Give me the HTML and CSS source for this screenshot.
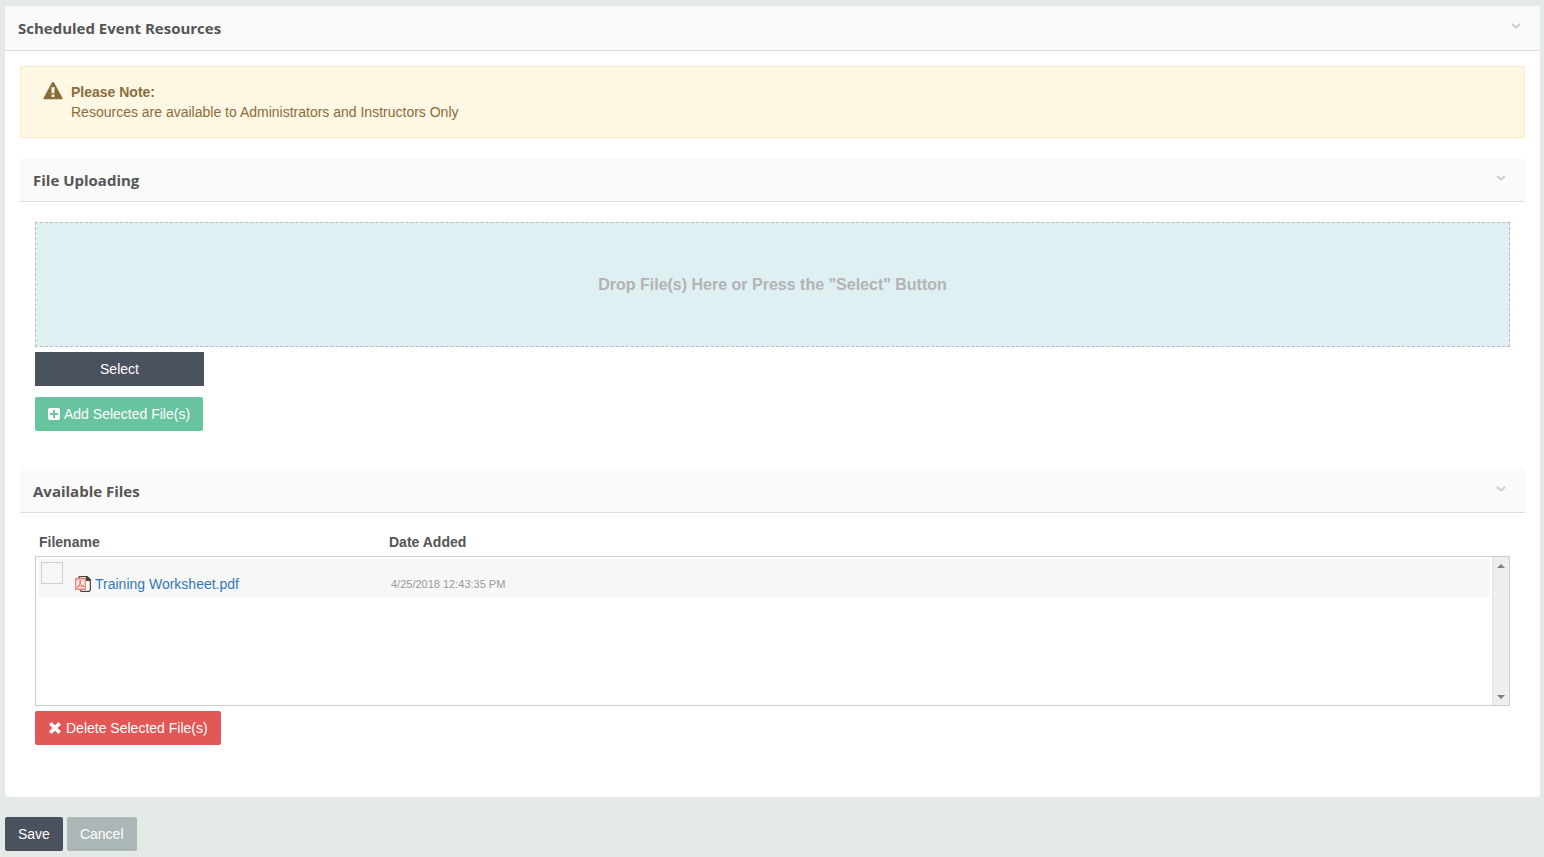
FILE: index.html
```
<!DOCTYPE html>
<html lang="en">
<head>
    <meta charset="UTF-8">
    <title>Scheduled Event Resources</title>
    <link rel="stylesheet" href="styles.css">
</head>
<body>
    <form class="page">
        <section class="panel">
            <div class="panel-heading">
                <h1>Scheduled Event Resources</h1>
                <button type="button" class="collapse-toggle" aria-label="Collapse resources">
                    <svg width="10" height="6" viewBox="0 0 10 6"><path d="M1 1l4 3.5L9 1"/></svg>
                </button>
            </div>
            <div class="panel-content">
                <div class="alert">
                    <svg class="alert-icon" width="20" height="18" viewBox="0 0 20 18">
                        <path fill-rule="evenodd" d="M10 0c.6 0 .9.2 1.200.7l8.300 15.300c.4.7 0 1.200-.7 1.200H1.200c-.7 0-1.100-.5-.7-1.200L8.800.7C9.100.2 9.400 0 10 0zM8.300 5.300l.4 6h2.600l.4-6zM8.600 12.500v2.600h2.800v-2.600z"/>
                    </svg>
                    <div>
                        <strong>Please Note:</strong>
                        <p>Resources are available to Administrators and Instructors Only</p>
                    </div>
                </div>

                <!-- Upload -->
                <section class="sub-panel">
                    <div class="panel-heading">
                        <h2>File Uploading</h2>
                        <button type="button" class="collapse-toggle" aria-label="Collapse file uploading">
                            <svg width="10" height="6" viewBox="0 0 10 6"><path d="M1 1l4 3.5L9 1"/></svg>
                        </button>
                    </div>
                    <div class="upload-content">
                        <div class="drop-zone">Drop File(s) Here or Press the "Select" Button</div>
                        <button type="button" class="btn btn-dark btn-select">Select</button>
                        <button type="button" class="btn btn-success">
                            <svg width="12" height="12" viewBox="0 0 12 12"><path fill-rule="evenodd" d="M2 0h8a2 2 0 0 1 2 2v8a2 2 0 0 1-2 2H2a2 2 0 0 1-2-2V2a2 2 0 0 1 2-2zM5 2v3H2v2h3v3h2V7h3V5H7V2z"/></svg>
                            Add Selected File(s)
                        </button>
                    </div>
                </section>

                <!-- File list -->
                <section class="sub-panel">
                    <div class="panel-heading">
                        <h2>Available Files</h2>
                        <button type="button" class="collapse-toggle" aria-label="Collapse available files">
                            <svg width="10" height="6" viewBox="0 0 10 6"><path d="M1 1l4 3.5L9 1"/></svg>
                        </button>
                    </div>
                    <div class="files-content">
                        <table class="files-head">
                            <thead>
                                <tr>
                                    <th class="col-name">Filename</th>
                                    <th>Date Added</th>
                                </tr>
                            </thead>
                        </table>
                        <div class="file-list">
                            <div class="file-rows">
                                <table class="files-table">
                                    <tbody>
                                        <tr>
                                            <td class="col-check"><input type="checkbox" class="file-check" aria-label="Training Worksheet.pdf"></td>
                                            <td class="col-file">
                                                <a href="#" class="file-link">
                                                    <svg width="16" height="16" viewBox="0 0 16 16" fill="none">
                                                        <path d="M3.500 3V2l1-1.300h7.500L15.300 4v10l-1 1.300H6L5 14" fill="#fff" stroke="#444" stroke-width="1.200"/>
                                                        <path d="M11 0h1.500L16 3.500V5h-5z" fill="#444"/>
                                                        <path d="M.7 2.700h9.600v10.600H.7z" fill="#fde9e7" stroke="#f0837a" stroke-width="1.400"/>
                                                        <path d="M2 11.500C4 10 5.800 7 5.500 4.500c-.6-.8-1.200.2-.7 1.500.8 2 2 3.500 4.200 4.500M2 11.500c1-1.800 4-2.300 7-1" stroke="#ea6a60"/>
                                                    </svg>
                                                    Training Worksheet.pdf
                                                </a>
                                            </td>
                                            <td class="col-date">4/25/2018 12:43:35 PM</td>
                                        </tr>
                                    </tbody>
                                </table>
                            </div>
                            <div class="scroll-track">
                                <svg width="8" height="4" viewBox="0 0 8 4"><path d="M4 0l4 4H0z"/></svg>
                                <svg width="8" height="4" viewBox="0 0 8 4"><path d="M0 0h8L4 4z"/></svg>
                            </div>
                        </div>
                        <button type="button" class="btn btn-danger">
                            <svg width="14" height="12" viewBox="0 0 14 12"><path d="M3.500 0L7 3.300 10.500 0 13 2.500 9.500 6 13 9.500 10.500 12 7 8.700 3.500 12 1 9.500 4.500 6 1 2.500z"/></svg>
                            Delete Selected File(s)
                        </button>
                    </div>
                </section>
            </div>
        </section>

        <div class="form-actions">
            <button type="submit" class="btn btn-dark">Save</button>
            <button type="button" class="btn btn-muted">Cancel</button>
        </div>
    </form>
</body>
</html>
```
FILE: styles.css
```
* {
    margin: 0;
    padding: 0;
    box-sizing: border-box;
}

body {
    background: #e4eae6;
    font-family: "Liberation Sans", Arial, sans-serif;
    font-size: 14px;
    line-height: 20px;
    color: #555;
}

.page {
    padding: 6px 4px 6px 5px;
}

.panel {
    background: #fff;
    border-radius: 3px;
}

.panel-heading {
    display: flex;
    justify-content: space-between;
    align-items: center;
    height: 45px;
    padding: 0 19px 0 13px;
    background: #fafafa;
    border-bottom: 1px solid #ddd;
    border-radius: 3px 3px 0 0;
}

.sub-panel .panel-heading {
    height: 44px;
}

.panel-heading h1,
.panel-heading h2 {
    font-family: "Open Sans", sans-serif;
    font-size: 15px;
    font-weight: 700;
    line-height: 20px;
    color: #555;
}

.collapse-toggle {
    display: flex;
    padding: 0 0 4px;
    border: none;
    background: none;
    cursor: pointer;
}

.collapse-toggle svg {
    fill: none;
    stroke: #ccc;
    stroke-width: 2;
}

.panel-content {
    padding: 15px;
}

.alert {
    display: flex;
    gap: 8px;
    margin-bottom: 20px;
    padding: 15px 22px;
    background: #fdf7e3;
    border: 1px solid #faebcc;
    color: #8a6d3b;
}

.alert-icon {
    fill: #8a6d3b;
}

.upload-content {
    display: flex;
    flex-direction: column;
    align-items: flex-start;
    padding: 20px 15px 38px;
}

.drop-zone {
    display: flex;
    justify-content: center;
    align-items: center;
    width: 100%;
    height: 125px;
    background: #dff0f3;
    border: 1px dashed #bbb;
    color: #b3b3b3;
    font-size: 16px;
    font-weight: bold;
}

.btn {
    display: inline-flex;
    justify-content: center;
    align-items: center;
    gap: 4px;
    height: 34px;
    padding: 0 13px;
    border: none;
    border-radius: 2px;
    color: #fff;
    font-family: inherit;
    font-size: 14px;
    line-height: 20px;
    cursor: pointer;
}

.btn svg {
    fill: #fff;
}

.btn-dark {
    background: #4a515f;
}

.btn-select {
    width: 169px;
    margin: 5px 0 11px;
    border-radius: 0;
}

.btn-success {
    background: #68c39f;
}

.btn-danger {
    background: #e25856;
}

.btn-muted {
    background: #abb7b7;
}

.files-content {
    padding: 19px 15px 37px;
}

.files-head {
    width: 100%;
    border-spacing: 0;
    table-layout: fixed;
}

.files-head th {
    padding: 0 4px 4px;
    text-align: left;
}

.col-name {
    width: 350px;
}

.file-list {
    display: flex;
    height: 150px;
    margin-bottom: 5px;
    border: 1px solid #ccc;
}

.file-rows {
    flex: 1;
    padding: 2px;
}

.files-table {
    width: 100%;
    border-spacing: 0;
    table-layout: fixed;
    background: #f7f7f7;
}

.files-table td {
    height: 38px;
    padding-top: 12px;
    vertical-align: middle;
}

.files-table .col-check {
    width: 37px;
    padding: 3px;
    vertical-align: top;
}

.col-file {
    width: 316px;
}

.file-check {
    display: block;
    appearance: none;
    width: 22px;
    height: 22px;
    border: 1px solid #d0cec5;
}

.file-link {
    display: flex;
    align-items: center;
    gap: 4px;
    color: #337ab7;
    text-decoration: none;
}

.col-date {
    color: #999;
    font-size: 11px;
}

.scroll-track {
    display: flex;
    flex-direction: column;
    justify-content: space-between;
    align-items: center;
    width: 17px;
    padding: 7px 0 6px;
    background: #eee;
    border-left: 1px solid #e3e3e3;
}

.scroll-track svg {
    fill: #808080;
}

.form-actions {
    display: flex;
    gap: 4px;
    margin-top: 20px;
}
```
